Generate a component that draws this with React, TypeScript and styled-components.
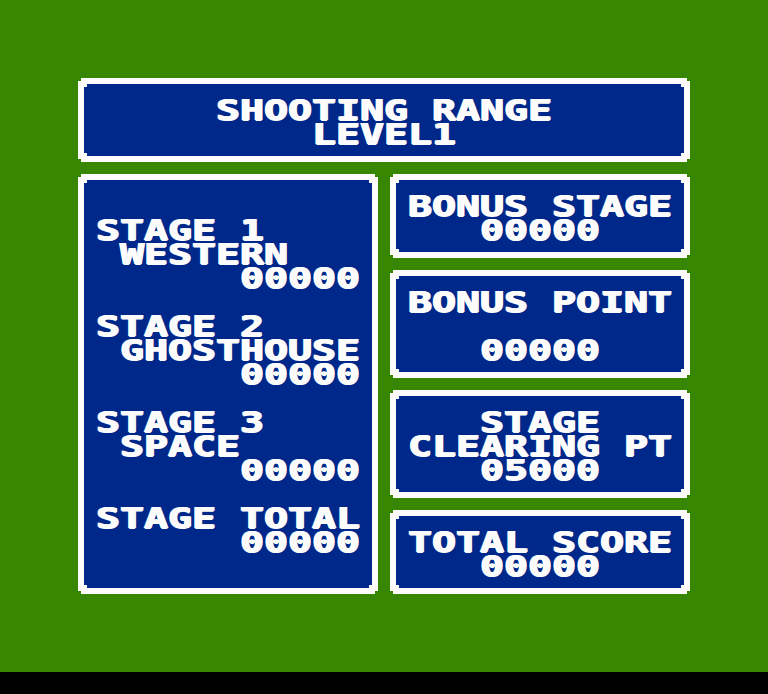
import { FC } from "react";
import styled, { createGlobalStyle } from "styled-components";

const GlobalStyle = createGlobalStyle`
    html, body {
        margin: 0;
        background: #000;
    }
`;

interface StageResult {
    label: string;
    name?: string;
    score: string;
}

const stages: StageResult[] = [
    { label: "STAGE 1", name: "WESTERN", score: "00000" },
    { label: "STAGE 2", name: "GHOSTHOUSE", score: "00000" },
    { label: "STAGE 3", name: "SPACE", score: "00000" },
    { label: "STAGE TOTAL", score: "00000" },
];

const ResultsScreen: FC = () => (
    <Screen>
        <Panel $wide>
            <Line>SHOOTING RANGE</Line>
            <Line>LEVEL1</Line>
        </Panel>

        <Panel>
            <StageList>
                {stages.map((stage) => (
                    <Group key={stage.label}>
                        <Line $align="left">{stage.label}</Line>
                        {stage.name && <Line $align="left" $indent>{stage.name}</Line>}
                        <Line $align="right">{stage.score}</Line>
                    </Group>
                ))}
            </StageList>
        </Panel>

        <Column>
            <Panel>
                <Line>BONUS STAGE</Line>
                <Line>00000</Line>
            </Panel>
            <Panel>
                <Line>BONUS POINT</Line>
                <Line $skip>00000</Line>
            </Panel>
            <Panel>
                <Line>STAGE</Line>
                <Line>CLEARING PT</Line>
                <Line>05000</Line>
            </Panel>
            <Panel>
                <Line>TOTAL SCORE</Line>
                <Line>00000</Line>
            </Panel>
        </Column>
    </Screen>
);

export default function App() {
    return (
        <>
            <GlobalStyle />
            <ResultsScreen />
        </>
    );
}

const white = "#fcfcfc";
const blue = "#00288a";
const green = "#388700";

// one 8x8 tile is 24px on screen
const tile = 24;

const Screen = styled.main`
    box-sizing: border-box;
    width: 768px;
    height: 672px;
    padding: 78px 78px 0;
    background: ${green};
    display: grid;
    grid-template-columns: 300px 300px;
    grid-template-rows: auto auto;
    gap: 12px;
    align-content: start;
`;

const Column = styled.div`
    display: flex;
    flex-direction: column;
    gap: 12px;
`;

// white frame with the one-pixel notch on every corner
const corner = `linear-gradient(${white}, ${white})`;

const Panel = styled.section<{ $wide?: boolean }>`
    box-sizing: border-box;
    grid-column: ${({ $wide }) => ($wide ? "1 / -1" : "auto")};
    border: 6px solid ${white};
    padding: 12px;
    display: flex;
    flex-direction: column;
    justify-content: center;
    background:
        ${corner} left top / 3px 3px no-repeat,
        ${corner} right top / 3px 3px no-repeat,
        ${corner} left bottom / 3px 3px no-repeat,
        ${corner} right bottom / 3px 3px no-repeat,
        ${blue};
    clip-path: polygon(
        3px 0, calc(100% - 3px) 0, calc(100% - 3px) 3px, 100% 3px,
        100% calc(100% - 3px), calc(100% - 3px) calc(100% - 3px),
        calc(100% - 3px) 100%, 3px 100%, 3px calc(100% - 3px),
        0 calc(100% - 3px), 0 3px, 3px 3px
    );
`;

const StageList = styled.div`
    display: flex;
    flex-direction: column;
    gap: ${tile}px;
`;

const Group = styled.div`
    display: flex;
    flex-direction: column;
`;

const Line = styled.div<{ $align?: "left" | "center" | "right"; $indent?: boolean; $skip?: boolean }>`
    height: ${tile}px;
    margin-top: ${({ $skip }) => ($skip ? `${tile}px` : "0")};
    padding-left: ${({ $indent }) => ($indent ? `${tile}px` : "0")};
    text-align: ${({ $align = "center" }) => $align};
    font-family: "DejaVu Sans Mono", "Liberation Mono", monospace;
    font-weight: bold;
    font-size: 40px;
    line-height: ${tile}px;
    letter-spacing: -0.08px;
    white-space: pre;
    color: ${white};
    text-shadow: 1px 0 0 ${white}, -1px 0 0 ${white}, 0 1px 0 ${white};
    transform: translateY(2px) scaleY(0.72);
`;
